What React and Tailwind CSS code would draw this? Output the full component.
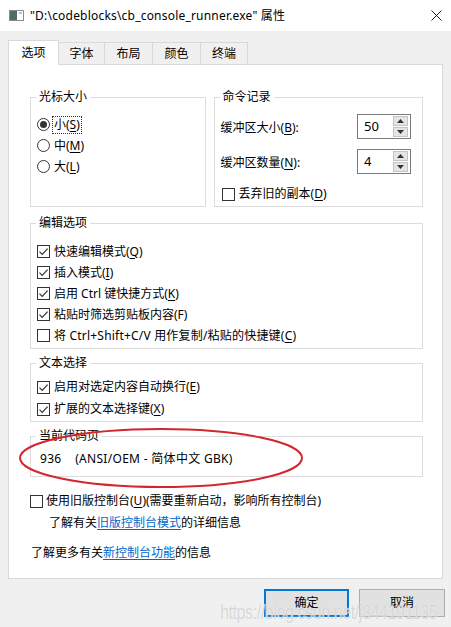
import React from 'react';

const Acc = ({ children }) => <span className="underline underline-offset-[2px]">{children}</span>;

const CheckBox = ({ checked }) => (
  <span className="w-[13px] h-[13px] border border-[#333] bg-white flex items-center justify-center shrink-0">
    {checked && (
      <svg width="11" height="11" viewBox="0 0 11 11">
        <path d="M1.5 5.6 L4.2 8.3 L9.6 2.6" fill="none" stroke="#333" strokeWidth="1.2" />
      </svg>
    )}
  </span>
);

const Radio = ({ checked }) => (
  <span className="w-[13px] h-[13px] rounded-full border border-[#333] bg-white flex items-center justify-center shrink-0">
    {checked && <span className="w-[7px] h-[7px] rounded-full bg-[#333]" />}
  </span>
);

// fieldset draws the windows groupbox line through the title
const Group = ({ title, className, bodyClass, children }) => (
  <fieldset className={`border border-[#dcdcdc] ${className}`}>
    <legend className="ml-[5px] px-[3px] leading-[16px]">{title}</legend>
    <div className={bodyClass}>{children}</div>
  </fieldset>
);

const Row = ({ children }) => <div className="h-[21px] flex items-center gap-[4px]">{children}</div>;

const Spin = ({ value }) => (
  <div className="w-[54px] h-[25px] border border-[#7a7a7a] bg-white flex items-center pl-[6px] pr-[2px]">
    <span className="flex-1 text-[13px]">{value}</span>
    <div className="flex flex-col gap-px w-[15px]">
      <span className="h-[10px] bg-[#e5e5e5] border border-[#c4c4c4] flex items-center justify-center">
        <svg width="7" height="4" viewBox="0 0 7 4"><path d="M0 4 L3.5 0 L7 4 Z" fill="#333" /></svg>
      </span>
      <span className="h-[10px] bg-[#e5e5e5] border border-[#c4c4c4] flex items-center justify-center">
        <svg width="7" height="4" viewBox="0 0 7 4"><path d="M0 0 L3.5 4 L7 0 Z" fill="#333" /></svg>
      </span>
    </div>
  </div>
);

const tabs = [
  { label: '字体', w: 'w-[46px]' },
  { label: '布局', w: 'w-[48px]' },
  { label: '颜色', w: 'w-[48px]' },
  { label: '终端', w: 'w-[47px]' },
];

export default function App() {
  return (
    <div className="relative w-[451px] h-[627px] bg-[#f0f0f0] text-[12px] text-black font-['Noto_Sans','Noto_Sans_CJK_SC',sans-serif] overflow-hidden">
      {/* title bar */}
      <div className="h-[31px] bg-white flex items-center">
        <svg className="ml-[9px]" width="15" height="11" viewBox="0 0 15 11">
          <rect x="0.5" y="0.5" width="14" height="10" fill="#fff" stroke="#8a8a8a" />
          <rect x="1" y="1" width="7" height="9" fill="#4d6e6e" />
          <rect x="10" y="2" width="3" height="2" fill="#bdbdbd" />
        </svg>
        <span className="ml-[6px] leading-none tracking-[0.2px]">"D:\codeblocks\cb_console_runner.exe" 属性</span>
        <svg className="ml-auto mr-[9px]" width="11" height="11" viewBox="0 0 11 11">
          <path d="M0.5 0.5 L10.5 10.5 M10.5 0.5 L0.5 10.5" stroke="#222" strokeWidth="1" />
        </svg>
      </div>

      {/* tabs */}
      <div className="mt-[9px] h-[24px] pl-[8px] flex items-end">
        <div className="relative z-10 w-[51px] h-[25px] -mb-px bg-white border border-b-0 border-[#d9d9d9] flex items-center justify-center">
          选项
        </div>
        {tabs.map((t) => (
          <div key={t.label} className={`${t.w} h-[22px] bg-[#f0f0f0] border-t border-r border-[#d9d9d9] flex items-center justify-center`}>
            {t.label}
          </div>
        ))}
      </div>

      {/* panel */}
      <div className="mx-[8px] h-[515px] bg-white border border-[#d9d9d9] pt-[24px] pl-[21px] pr-[19px]">
        <div className="flex gap-[8px]">
          <Group title="光标大小" className="w-[176px] h-[118px]" bodyClass="px-[6px] pt-[9px]">
            <Row>
              <Radio checked />
              <span className="outline outline-1 outline-dotted outline-[#333] px-px leading-[16px] -ml-px">小(<Acc>S</Acc>)</span>
            </Row>
            <Row>
              <Radio />
              <span>中(<Acc>M</Acc>)</span>
            </Row>
            <Row>
              <Radio />
              <span>大(<Acc>L</Acc>)</span>
            </Row>
          </Group>
          <Group title="命令记录" className="w-[210px] h-[118px]" bodyClass="pl-[6px] pr-[11px] pt-[9px]">
            <div className="flex items-center justify-between">
              <span className="pt-[3px]">缓冲区大小(<Acc>B</Acc>):</span>
              <Spin value="50" />
            </div>
            <div className="mt-[10px] flex items-center justify-between">
              <span className="pt-[3px]">缓冲区数量(<Acc>N</Acc>):</span>
              <Spin value="4" />
            </div>
            <div className="mt-[11px] flex items-center gap-[4px] pl-px">
              <CheckBox />
              <span>丢弃旧的副本(<Acc>D</Acc>)</span>
            </div>
          </Group>
        </div>

        <Group title="编辑选项" className="mt-[8px] h-[134px]" bodyClass="px-[6px] pt-[10px]">
          <Row><CheckBox checked /><span>快速编辑模式(<Acc>Q</Acc>)</span></Row>
          <Row><CheckBox checked /><span>插入模式(<Acc>I</Acc>)</span></Row>
          <Row><CheckBox checked /><span>启用 Ctrl 键快捷方式(<Acc>K</Acc>)</span></Row>
          <Row><CheckBox checked /><span>粘贴时筛选剪贴板内容(F)</span></Row>
          <Row><CheckBox /><span className="tracking-[0.2px]">将 Ctrl+Shift+C/V 用作复制/粘贴的快捷键(<Acc>C</Acc>)</span></Row>
        </Group>

        <Group title="文本选择" className="mt-[6px] h-[67px]" bodyClass="px-[6px] pt-[5px]">
          <div className="h-[22px] flex items-center gap-[4px]"><CheckBox checked /><span>启用对选定内容自动换行(<Acc>E</Acc>)</span></div>
          <div className="h-[22px] flex items-center gap-[4px]"><CheckBox checked /><span>扩展的文本选择键(<Acc>X</Acc>)</span></div>
        </Group>

        <Group title="当前代码页" className="mt-[6px] h-[49px]" bodyClass="pl-[9px] pt-[7px]">
          <div className="leading-[16px] tracking-[0.3px]">936&nbsp;&nbsp;&nbsp;&nbsp;(ANSI/OEM - 简体中文 GBK)</div>
        </Group>

        <div className="mt-[16px] h-[16px] flex items-center gap-[3px]">
          <CheckBox />
          <span>使用旧版控制台(<Acc>U</Acc>)(需要重新启动，影响所有控制台)</span>
        </div>
        <div className="mt-[6px] h-[16px] pl-[19px] flex items-center">
          <span>了解有关<span className="text-[#0066cc] underline underline-offset-[2px]">旧版控制台模式</span>的详细信息</span>
        </div>
        <div className="mt-[14px] h-[16px] pl-px flex items-center">
          <span>了解更多有关<span className="text-[#0066cc] underline underline-offset-[2px]">新控制台功能</span>的信息</span>
        </div>
      </div>

      {/* buttons */}
      <div className="mt-[10px] flex justify-end gap-[10px] pr-[6px]">
        <button className="w-[85px] h-[28px] bg-[#e1e1e1] border-2 border-[#0078d7]">确定</button>
        <button className="w-[86px] h-[28px] bg-[#e1e1e1] border border-[#adadad]">取消</button>
      </div>

      {/* red annotation */}
      <svg className="absolute left-0 top-0 pointer-events-none" width="451" height="627" viewBox="0 0 451 627">
        <ellipse cx="161" cy="458" rx="141" ry="29" fill="none" stroke="#d4262e" strokeWidth="2" />
      </svg>

      {/* watermark */}
      <div className="absolute left-[220px] top-[597px] text-[16px] tracking-[-0.4px] scale-y-[1.3] origin-top-left font-['Liberation_Sans',sans-serif] text-[#bdbdbd]/60 [text-shadow:0_0_1px_#fff] pointer-events-none">
        https://blog.csdn.net/j844191135
      </div>
    </div>
  );
}
